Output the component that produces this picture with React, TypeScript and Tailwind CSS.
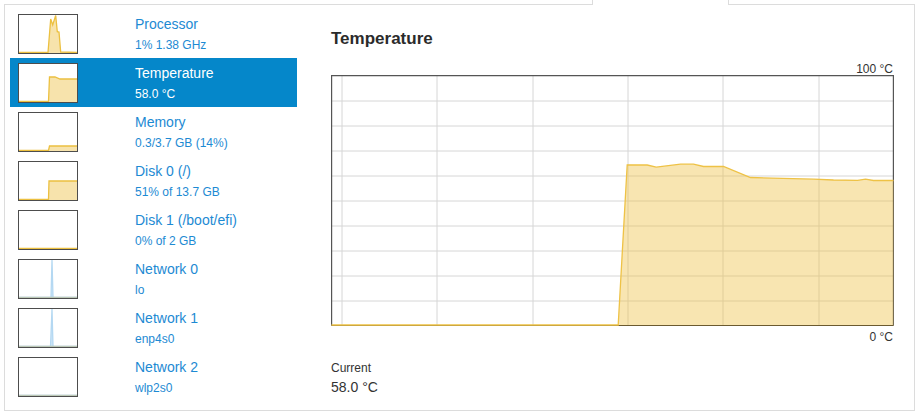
import { FC } from "react";

type Pt = [number, number];

type Device = {
  title: string;
  sub: string;
  kind: "temp" | "net";
  points: Pt[];
};

const devices: Device[] = [
  {
    title: "Processor",
    sub: "1% 1.38 GHz",
    kind: "temp",
    points: [
      [0, 37.5], [29, 37.5], [31.7, 4], [33.7, 10], [36.7, 0.5], [38.3, 16.7], [40, 17], [41.7, 37], [58, 37.5],
    ],
  },
  {
    title: "Temperature",
    sub: "58.0 °C",
    kind: "temp",
    points: [[0, 37.5], [29.5, 37.5], [30.5, 13], [36, 13], [41, 15], [58, 15]],
  },
  {
    title: "Memory",
    sub: "0.3/3.7 GB (14%)",
    kind: "temp",
    points: [[0, 37.5], [29.5, 37.5], [30.5, 33], [58, 33]],
  },
  {
    title: "Disk 0 (/)",
    sub: "51% of 13.7 GB",
    kind: "temp",
    points: [[0, 37.5], [29.5, 37.5], [30, 19], [58, 19]],
  },
  {
    title: "Disk 1 (/boot/efi)",
    sub: "0% of 2 GB",
    kind: "temp",
    points: [[0, 37.3], [58, 37.3]],
  },
  {
    title: "Network 0",
    sub: "lo",
    kind: "net",
    points: [[0, 37.3], [32, 37.3], [33, 0], [34, 37.3], [58, 37.3]],
  },
  {
    title: "Network 1",
    sub: "enp4s0",
    kind: "net",
    points: [[0, 37.3], [31.5, 37.3], [33, 0], [34, 37.3], [58, 37.3]],
  },
  {
    title: "Network 2",
    sub: "wlp2s0",
    kind: "net",
    points: [[0, 37.3], [58, 37.3]],
  },
];

const toPath = (pts: Pt[]) => pts.map((p) => `${p[0]},${p[1]}`).join(" ");

const Thumb: FC<{ d: Device }> = ({ d }) => {
  const stroke = d.kind === "net" ? "#b4d8f2" : "#ecc040";
  const fill = d.kind === "net" ? "#cfe6f7" : "#f7e3ac";
  const area = [...d.points, [58, 38] as Pt, [0, 38] as Pt];
  return (
    <div className="w-[60px] h-[40px] shrink-0 border border-[#4d4d4d] bg-white">
      <svg width="58" height="38" viewBox="0 0 58 38" className="block">
        <polygon points={toPath(area)} fill={fill} />
        <polyline points={toPath(d.points)} fill="none" stroke={stroke} strokeWidth="1.3" />
        {d.kind === "net" && <line x1="0" y1="37.4" x2="58" y2="37.4" stroke="#bcc8b6" strokeWidth="1.4" />}
      </svg>
    </div>
  );
};

const Item: FC<{ d: Device; active?: boolean }> = ({ d, active }) => (
  <div className={`flex h-[49px] pl-[8px] pt-[5px] ${active ? "bg-[#0587ca]" : ""}`}>
    <Thumb d={d} />
    <div className={`ml-[57px] flex flex-col ${active ? "text-white" : "text-[#1d8ad3]"}`}>
      <span className="text-[14px] leading-[16px] mt-[2px]">{d.title}</span>
      <span className="text-[12px] leading-[14px] mt-[6px]">{d.sub}</span>
    </div>
  </div>
);

// main chart data, in px relative to the 562x250 plot
const series: Pt[] = [
  [0, 249.5], [286.7, 249.5], [295.7, 89.3], [315.7, 89.5], [324.7, 91.7], [349, 88.7], [362, 88.7],
  [372, 91], [392, 91], [419, 102], [482, 103.7], [502, 104.5], [526, 104.8], [534, 103.7], [542, 105], [562, 105],
];

const Chart: FC = () => {
  const vx = [10, 105.3, 200.6, 295.9, 391.2, 486.5];
  const hy = [25, 50, 75, 100, 125, 150, 175, 200, 225];
  const area = [...series, [562, 250] as Pt, [0, 250] as Pt];
  return (
    <svg width="563" height="251" viewBox="-0.5 -0.5 563 251" className="block">
      {vx.map((x) => (
        <line key={x} x1={Math.round(x) + 0.5} y1="0" x2={Math.round(x) + 0.5} y2="250" stroke="#d6d6d6" strokeWidth="1" />
      ))}
      {hy.map((y) => (
        <line key={y} x1="0" y1={y + 0.5} x2="562" y2={y + 0.5} stroke="#d6d6d6" strokeWidth="1" />
      ))}
      <polyline points="0,250 0,0 562,0 562,250" fill="none" stroke="#555" strokeWidth="1.4" />
      <polygon points={toPath(area)} fill="#efc146" fillOpacity="0.42" />
      <line x1="0" y1="250" x2="562" y2="250" stroke="#6b5a30" strokeWidth="1" />
      <polyline points={toPath(series)} fill="none" stroke="#eec246" strokeWidth="1.3" />
    </svg>
  );
};

export default function App() {
  return (
    <div className="w-[920px] h-[419px] bg-white font-['Liberation_Sans',Arial,sans-serif]">
      <div className="flex h-[5px] ml-[4px]">
        <div className="w-[588px] border-b border-[#dcdcdc]" />
        <div className="w-[137px] border-l border-r border-[#dcdcdc]" />
        <div className="w-[186px] border-b border-[#dcdcdc]" />
      </div>
      <div className="flex ml-[4px] w-[911px] h-[406px] border-l border-r border-b border-[#dcdcdc]">
        <div className="w-[292px] pl-[5px] pt-[4px] flex flex-col">
          {devices.map((d) => (
            <Item key={d.title} d={d} active={d.title === "Temperature"} />
          ))}
        </div>
        <div className="flex flex-col pl-[34px] pt-[24px] text-[#333]">
          <h2 className="text-[17px] leading-[20px] font-bold text-[#2b2b2b]">Temperature</h2>
          <div className="w-[562px] text-right text-[12px] leading-[12px] mt-[14px]">100 °C</div>
          <Chart />
          <div className="w-[562px] text-right text-[12px] leading-[12px] mt-[5px]">0 °C</div>
          <span className="text-[12px] leading-[14px] mt-[18px]">Current</span>
          <span className="text-[14px] leading-[16px] mt-[4px]">58.0 °C</span>
        </div>
      </div>
    </div>
  );
}
